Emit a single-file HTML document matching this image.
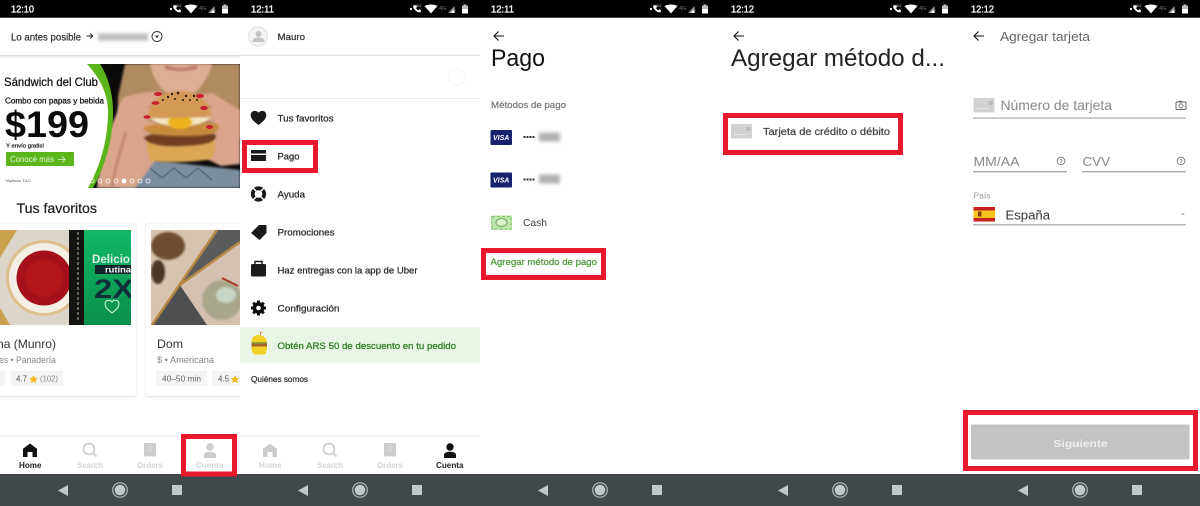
<!DOCTYPE html>
<html><head><meta charset="utf-8"><style>
html,body{margin:0;padding:0;background:#fff;width:1200px;height:506px;overflow:hidden}
svg{display:block;filter:blur(.3px)}
text{font-family:"Liberation Sans",sans-serif}
.m{stroke:currentColor;stroke-width:.25}
</style></head><body>
<svg width="1200" height="506" viewBox="0 0 1200 506" xmlns="http://www.w3.org/2000/svg">
<defs>
<filter id="b1" x="-20%" y="-20%" width="140%" height="140%"><feGaussianBlur stdDeviation="1"/></filter>
<filter id="b2" x="-30%" y="-80%" width="160%" height="260%"><feGaussianBlur stdDeviation="1.800"/></filter>
<clipPath id="photo"><rect x="0" y="64" width="240" height="124"/></clipPath>
<clipPath id="c1"><rect x="0" y="230" width="131" height="95"/></clipPath>
<clipPath id="c2"><rect x="151" y="230" width="89" height="95"/></clipPath>
<clipPath id="p1"><rect x="0" y="0" width="240" height="506"/></clipPath>
<linearGradient id="gg" x1="0" y1="0" x2="0" y2="1"><stop offset="0" stop-color="#12b868"/><stop offset="1" stop-color="#0a8f4c"/></linearGradient>
<g id="st">
<circle cx="171" cy="9" r="1.100" fill="#fff"/>
<path d="M174 5.500l2-.5 1 2-1 1c.5 1 1.200 1.800 2.200 2.300l1-1 2 1-.5 2c-4 .5-7.500-3-7.700-6.800z" fill="#fff"/>
<path d="M184.500 6c3.500-2 9.500-2 13 0l-6.500 7.500z" fill="#fff"/>
<path d="M208 13h6.500V6z" fill="#999"/><path d="M211 13h3.500V9z" fill="#fff"/>
<rect x="222" y="5.500" width="6" height="8" rx=".8" fill="#bbb"/><rect x="223.500" y="4.500" width="3" height="1.200" fill="#ccc"/><rect x="222" y="9" width="6" height="4.500" fill="#fff"/>
</g>
<g id="nv">
<rect x="0" y="474" width="240" height="32" fill="#41484c"/>
<path d="M68 485v11l-10-5.500z" fill="#c3c8ca"/>
<circle cx="120" cy="490" r="7.300" fill="none" stroke="#c3c8ca" stroke-width="1"/>
<circle cx="120" cy="490" r="5.300" fill="#c3c8ca"/>
<rect x="172" y="485" width="10" height="10" fill="#c3c8ca"/>
</g>
<g id="card"><rect width="21" height="14.500" rx="1" fill="#d2d2d2"/><rect x="15" y="3" width="4.500" height="4" fill="#bbb"/><path d="M3 10.500h13" stroke="#f2f2f2" stroke-width="1" stroke-dasharray="2 1"/></g>
<g id="visa"><rect width="21.500" height="15" rx="1" fill="#17226f"/><text x="10.700" y="10" font-size="7" font-weight="bold" font-style="italic" fill="#fff" text-anchor="middle">VISA</text></g>
<g id="arr"><path d="M5 0H-5M-.5-4.500L-5 0l4.500 4.500" fill="none" stroke="#111" stroke-width="1.100"/></g>
<g id="hm"><path d="M30 443.500l-7 5.300V457h4.500v-5h5v5H37v-8.200z"/></g>
<g id="sr"><circle cx="89" cy="449" r="5.500" fill="none" stroke="currentColor" stroke-width="1.700"/><path d="M93 453l3.500 3.500" stroke="currentColor" stroke-width="1.800"/></g>
<g id="or"><path d="M144 443h12v14l-1.500-1.300-1.500 1.300-1.500-1.300-1.500 1.300-1.500-1.300-1.500 1.300-1.500-1.300-1.500 1.300z"/><path d="M147 447h6M147 450h6" stroke="#fff" stroke-opacity=".45" stroke-width=".8"/></g>
<g id="us"><circle cx="210" cy="447" r="3.700"/><path d="M204 458v-3c0-2 2-3.300 6-3.300s6 1.300 6 3.300v3z"/></g>
</defs>

<rect width="1200" height="506" fill="#fff"/>

<!-- status bars -->
<rect width="1200" height="17" fill="#000"/>
<rect y="17" width="1200" height="1" fill="#444"/>
<g font-size="10" fill="#fff" color="#fff" style="stroke:#fff;stroke-width:.35">
<text x="11" y="12.500" textLength="23" lengthAdjust="spacingAndGlyphs">12:10</text>
<text x="251" y="12.500" textLength="23" lengthAdjust="spacingAndGlyphs">12:11</text>
<text x="491" y="12.500" textLength="23" lengthAdjust="spacingAndGlyphs">12:11</text>
<text x="731" y="12.500" textLength="23" lengthAdjust="spacingAndGlyphs">12:12</text>
<text x="971" y="12.500" textLength="23" lengthAdjust="spacingAndGlyphs">12:12</text>
</g>
<use href="#st"/><use href="#st" x="240"/><use href="#st" x="480"/><use href="#st" x="720"/><use href="#st" x="960"/>
<g font-size="5.500" fill="#777"><text x="199" y="10">4G</text><text x="439" y="10">4G</text><text x="679" y="10">4G</text><text x="919" y="10">4G</text><text x="1159" y="10">4G</text></g>
<g font-size="4" fill="#ddd"><text x="176" y="7">4G</text><text x="416" y="7">4G</text><text x="656" y="7">4G</text><text x="896" y="7">4G</text><text x="1136" y="7">4G</text></g>

<!-- nav bars -->
<use href="#nv"/><use href="#nv" x="240"/><use href="#nv" x="480"/><use href="#nv" x="720"/><use href="#nv" x="960"/>

<!-- PANEL 1 -->
<text x="11" y="40.500" font-size="10" fill="#333" class="m" color="#333" textLength="70" lengthAdjust="spacingAndGlyphs">Lo antes posible</text>
<path d="M86.500 36h6M90 33.500l2.700 2.500-2.700 2.500" fill="none" stroke="#222" stroke-width="1"/>
<rect x="98" y="33.500" width="50" height="7" fill="#aaa" opacity=".8" filter="url(#b2)"/>
<circle cx="157" cy="36.500" r="5" fill="#fff" stroke="#333" stroke-width=".9"/><path d="M155 35.500h4l-2 2.700z" fill="#333"/>
<rect y="55" width="240" height="1" fill="#dcdcdc"/><rect y="56" width="240" height="2" fill="#f3f3f3"/>

<g clip-path="url(#photo)">
<rect x="85" y="64" width="155" height="124" fill="#0d0b0a"/>
<path d="M125 64l-7 33v40h122V64z" fill="#b08a60" filter="url(#b1)"/>
<path d="M150 64c2 14 14 34 30 34s28-18 32-34z" fill="#dcae94" filter="url(#b1)"/>
<path d="M165 64q16 8 32 0v5q-16 4-32 0z" fill="#bc7e6e" filter="url(#b1)"/>
<!-- blouse -->
<path d="M118 188l34-28 88 10v18z" fill="#7c8da0" filter="url(#b1)"/>
<path d="M150 168l12 10 12-10 12 10 12-10 14 12" stroke="#5b6b80" stroke-width="1.500" fill="none"/>
<!-- left hand -->
<path d="M97 188c3-24 10-54 20-75 2-8 4-14 8-16 12-4 24-6 36-5l1 8-16 8 14-2 1 8-14 6 10 4-8 12 8 22-22 30z" fill="#d9a58c" filter="url(#b1)"/>
<path d="M112 188c2-16 8-36 14-56" stroke="#b97c68" fill="none" stroke-width="2" filter="url(#b1)"/>
<!-- right hand -->
<path d="M240 110l-28-17-14 2 2 8 14 4-10 2 1 9 12 7-4 3 2 8-14 20 20 10 19-2z" fill="#d9a58c" filter="url(#b1)"/>
<!-- burger -->
<path d="M150 160c-3-10-4-18-2-20h66c2 3 1 12-2 18-4 4-56 6-62 2z" fill="#d9a755" filter="url(#b1)"/>
<path d="M144 138c2-7 70-9 72-2-2 6-8 9-34 10-22 1-34-2-38-8z" fill="#6f3c22" filter="url(#b1)"/>
<path d="M143 128c4-6 72-8 76-2-2 8-8 10-36 10-26 0-36-2-40-8z" fill="#c88a3c" filter="url(#b1)"/>
<path d="M150 118c10-2 50-4 60 0-6 6-16 8-30 8s-24-2-30-8z" fill="#f5e7c0" filter="url(#b1)"/>
<ellipse cx="180" cy="122" rx="12" ry="7" fill="#eeb21e" filter="url(#b1)"/>
<path d="M148 116c2-14 14-25 32-25 16 0 28 9 31 24-6 3-56 5-63 1z" fill="#d49a55" filter="url(#b1)"/>
<g fill="#2c1a10"><circle cx="168" cy="97" r="1.200"/><circle cx="172" cy="94" r="1.200"/><circle cx="178" cy="93" r="1.300"/><circle cx="186" cy="96" r="1.200"/><circle cx="194" cy="96" r="1.200"/><circle cx="175" cy="99" r="1"/><circle cx="183" cy="100" r="1"/><circle cx="190" cy="100" r="1"/><circle cx="197" cy="100" r="1"/><circle cx="163" cy="100" r="1"/></g>
<g fill="#c8202f"><ellipse cx="158" cy="94" rx="4" ry="2"/><ellipse cx="155.500" cy="103" rx="4" ry="1.800"/><ellipse cx="147" cy="117" rx="3.500" ry="1.700"/><ellipse cx="200" cy="96" rx="4" ry="2"/><ellipse cx="204" cy="108" rx="3.800" ry="2.200"/><ellipse cx="209.500" cy="127" rx="3.500" ry="2"/></g>
<!-- white left panel with green swoosh -->
<path d="M0 64h100c8 12 13 30 13 48 0 30-9 56-20 76H0z" fill="#5bb51a"/>
<path d="M0 64h87c13 14 21 30 21 48 0 30-9 56-20 76H0z" fill="#fff"/>
</g>
<text x="4" y="86" font-size="12" fill="#111" class="m" color="#111" textLength="94" lengthAdjust="spacingAndGlyphs">Sándwich del Club</text>
<text x="5" y="103.500" font-size="7.800" fill="#111" class="m" color="#111" textLength="99" lengthAdjust="spacingAndGlyphs">Combo con papas y bebida</text>
<text x="5" y="137" font-size="37" font-weight="bold" fill="#0a0a0a" textLength="84" lengthAdjust="spacingAndGlyphs">$199</text>
<text x="6" y="147.500" font-size="5.500" fill="#222" class="m" color="#222" textLength="38" lengthAdjust="spacingAndGlyphs">Y envío gratis!</text>
<rect x="6" y="152" width="68" height="14" fill="#5db51c"/>
<text x="10" y="162" font-size="8.500" fill="#e4f5d4" textLength="44" lengthAdjust="spacingAndGlyphs">Conocé más</text>
<path d="M58 159.500h7M62 156.500l3 3-3 3" fill="none" stroke="#e4f5d4" stroke-width=".8"/>
<text x="5" y="182" font-size="4" fill="#555" textLength="26" lengthAdjust="spacingAndGlyphs">*Aplican T&amp;C</text>
<g fill="none" stroke="#fff" stroke-width=".8" opacity=".95"><circle cx="92" cy="181" r="2"/><circle cx="100" cy="181" r="2"/><circle cx="108" cy="181" r="2"/><circle cx="116" cy="181" r="2"/><circle cx="132" cy="181" r="2"/><circle cx="140" cy="181" r="2"/><circle cx="148" cy="181" r="2"/></g>
<circle cx="124" cy="181" r="2.400" fill="#fff"/>

<text x="16.500" y="213" font-size="14" fill="#222" class="m" color="#222" textLength="80.500" lengthAdjust="spacingAndGlyphs">Tus favoritos</text>

<!-- cards -->
<g clip-path="url(#p1)">
<rect x="-8" y="224" width="144" height="173" rx="2" fill="#dedede" filter="url(#b1)"/>
<rect x="-8" y="224" width="144" height="172" rx="2" fill="#fff"/>
<rect x="146" y="224" width="110" height="173" rx="2" fill="#dedede" filter="url(#b1)"/>
<rect x="146" y="224" width="110" height="172" rx="2" fill="#fff"/>
</g>
<g clip-path="url(#c1)">
<rect x="0" y="230" width="80" height="95" fill="#dcd6ca"/>
<path d="M0 230h17L0 258zM0 308l10 17H0z" fill="#c9a24e"/>
<circle cx="44" cy="278" r="38" fill="#dcbf8c"/>
<circle cx="44" cy="278" r="35" fill="#f3efe4"/>
<circle cx="44" cy="278" r="27.500" fill="#a5111a"/>
<circle cx="44" cy="278" r="19" fill="#b4141c" filter="url(#b1)"/>
<rect x="69" y="230" width="15" height="95" fill="#14130f"/>
<path d="M78 232v90" stroke="#bbb" stroke-width="1" stroke-dasharray="3 2"/>
<rect x="84" y="230" width="47" height="95" fill="url(#gg)"/>
<text x="92" y="263" font-size="11.500" font-weight="bold" fill="#d7f3e0" textLength="38" lengthAdjust="spacingAndGlyphs">Delicio</text>
<rect x="95" y="265" width="36" height="9" fill="#10262a"/>
<text x="105" y="272.500" font-size="8" font-weight="bold" fill="#fff" textLength="26" lengthAdjust="spacingAndGlyphs">rutina</text>
<text x="94" y="298" font-size="27" font-weight="bold" fill="#10303a" textLength="40" lengthAdjust="spacingAndGlyphs">2X</text>
<path d="M112 313c-5-4-7-6-7-9 0-4 5-5 7-2 2-3 7-2 7 2 0 3-2 5-7 9z" fill="none" stroke="#d6f4e2" stroke-width="1"/>
</g>
<g clip-path="url(#c2)">
<rect x="151" y="230" width="89" height="95" fill="#d8c4ae"/>
<path d="M217 230h23v12l-60 43-27 40z" fill="#5a5b5b"/>
<path d="M153 325l27-40 27 40z" fill="#4e4f50"/>
<path d="M180 285l60-43v83h-33z" fill="#d6c1b1"/>
<path d="M152 325l65-95M180 285l60-43" stroke="#b78746" stroke-width="2.500"/>
<ellipse cx="168" cy="246" rx="17" ry="14" fill="#6e4e33" filter="url(#b1)"/>
<ellipse cx="158" cy="272" rx="7" ry="12" fill="#4d3626" filter="url(#b1)"/>
<ellipse cx="222" cy="300" rx="20" ry="20" fill="#a8a78a" filter="url(#b1)"/>
<ellipse cx="226" cy="295" rx="10" ry="8" fill="#c9d5c6" filter="url(#b1)"/>
<path d="M222 278l16 8" stroke="#a83a2a" stroke-width="2"/>
</g>
<text x="-3" y="348" font-size="12" fill="#333" textLength="59" lengthAdjust="spacingAndGlyphs">na (Munro)</text>
<text x="-1" y="363" font-size="9.500" fill="#858585" textLength="57" lengthAdjust="spacingAndGlyphs">es • Panadería</text>
<rect x="0" y="371" width="5" height="15" fill="#f4f4f4"/>
<rect x="11" y="371" width="52" height="15" fill="#f4f4f4"/>
<text x="16" y="381.500" font-size="8.500" fill="#555" textLength="11" lengthAdjust="spacingAndGlyphs">4.7</text>
<path d="M33.500 375l1.300 2.800 3 .3-2.200 2 .7 3-2.800-1.600-2.800 1.600.7-3-2.200-2 3-.3z" fill="#f7b91c"/>
<text x="40" y="381.500" font-size="8.500" fill="#888" textLength="18" lengthAdjust="spacingAndGlyphs">(102)</text>
<text x="157" y="348" font-size="12" fill="#333" textLength="26" lengthAdjust="spacingAndGlyphs">Dom</text>
<text x="157" y="363" font-size="9.500" fill="#858585" textLength="57" lengthAdjust="spacingAndGlyphs">$ • Americana</text>
<rect x="156" y="371" width="51" height="15" fill="#f4f4f4"/>
<text x="162" y="381.500" font-size="8.500" fill="#666" textLength="39" lengthAdjust="spacingAndGlyphs">40–50 min</text>
<rect x="212" y="371" width="28" height="15" fill="#f4f4f4"/>
<text x="218" y="381.500" font-size="8.500" fill="#555" textLength="11" lengthAdjust="spacingAndGlyphs">4.5</text>
<g clip-path="url(#p1)"><path d="M235 375l1.300 2.800 3 .3-2.200 2 .7 3-2.800-1.600-2.800 1.600.7-3-2.200-2 3-.3z" fill="#f7b91c"/></g>

<!-- bottom tabs 1 -->
<rect y="435" width="480" height="1.500" fill="#eee"/>
<use href="#hm" fill="#111"/>
<use href="#sr" color="#ccc"/>
<use href="#or" fill="#ccc"/>
<use href="#us" fill="#ccc"/>
<g font-size="8">
<text x="19" y="468" font-weight="bold" fill="#222" textLength="22.500" lengthAdjust="spacingAndGlyphs">Home</text>
<text x="77" y="468" font-weight="bold" fill="#d5d5d5" textLength="26" lengthAdjust="spacingAndGlyphs">Search</text>
<text x="137" y="468" font-weight="bold" fill="#d5d5d5" textLength="26" lengthAdjust="spacingAndGlyphs">Orders</text>
<text x="196" y="468" font-weight="bold" fill="#d5d5d5" textLength="27.500" lengthAdjust="spacingAndGlyphs">Cuenta</text>
</g>
<rect x="183.500" y="436.500" width="51" height="37.500" fill="none" stroke="#e8192c" stroke-width="5"/>

<!-- PANEL 2 -->
<circle cx="258" cy="36.500" r="9.500" fill="#f3f3f3" stroke="#e2e2e2" stroke-width="1"/>
<circle cx="258.500" cy="34" r="3" fill="#c4c4c4"/><path d="M252.500 42c0-3 2.500-4.500 6-4.500s6 1.500 6 4.500z" fill="#c4c4c4"/>
<text x="277.500" y="40" font-size="9.500" fill="#333" class="m" color="#333" textLength="27.500" lengthAdjust="spacingAndGlyphs">Mauro</text>
<rect x="240" y="54.500" width="240" height="1.500" fill="#e6e6e6"/>
<circle cx="457" cy="77" r="8" fill="none" stroke="#f4f4f4" stroke-width="1"/>
<rect x="240" y="98" width="240" height="1" fill="#ececec"/>

<path d="M258.500 125c-6-4.500-7.800-7-7.800-10 0-4.500 5.500-5.500 7.800-2.300 2.300-3.200 7.800-2.200 7.800 2.300 0 3-1.800 5.500-7.800 10z" fill="#1a1a1a"/>
<rect x="251" y="150" width="15" height="3.500" fill="#1a1a1a"/><rect x="251" y="155" width="15" height="6" fill="#1a1a1a"/>
<circle cx="258.500" cy="194" r="5.700" fill="none" stroke="#1a1a1a" stroke-width="3.800"/>
<path d="M253 188l3.500 3.500M264 188l-3.500 3.500M253 200l3.500-3.500M264 200l-3.500-3.500" stroke="#fff" stroke-width="1.500"/>
<path d="M251 233l8-8h7.500v8l-7 7z" fill="#1a1a1a"/>
<path d="M251 265.500c0-1 .5-1.500 1.500-1.500h12c1 0 1.500.5 1.500 1.500V275c0 1-.5 1.500-1.500 1.500h-12c-1 0-1.500-.5-1.500-1.500z" fill="#1a1a1a"/>
<path d="M255 264v-2.500h7v2.500" fill="none" stroke="#1a1a1a" stroke-width="1.400"/>
<circle cx="258.500" cy="308" r="4.500" fill="none" stroke="#111" stroke-width="2.800"/>
<g fill="#111"><rect x="257" y="300.500" width="3" height="15"/><rect x="251" y="306.500" width="15" height="3"/><rect x="257" y="300.500" width="3" height="15" transform="rotate(45 258.500 308)"/><rect x="257" y="300.500" width="3" height="15" transform="rotate(-45 258.500 308)"/></g>
<circle cx="258.500" cy="308" r="2.300" fill="#fff"/>

<g font-size="9.500" fill="#2a2a2a" class="m" color="#2a2a2a">
<text x="277.500" y="121.500" textLength="56" lengthAdjust="spacingAndGlyphs">Tus favoritos</text>
<text x="277.500" y="159.500" textLength="22" lengthAdjust="spacingAndGlyphs">Pago</text>
<text x="277.500" y="197.500" textLength="27.500" lengthAdjust="spacingAndGlyphs">Ayuda</text>
<text x="277.500" y="235.500" textLength="57" lengthAdjust="spacingAndGlyphs">Promociones</text>
<text x="277.500" y="273.500" textLength="140" lengthAdjust="spacingAndGlyphs">Haz entregas con la app de Uber</text>
<text x="277.500" y="311.500" textLength="62" lengthAdjust="spacingAndGlyphs">Configuración</text>
</g>
<rect x="240" y="327" width="240" height="35.500" fill="#e9f5e5"/>
<path d="M251.500 342c0-4.500 3-7 7-7s8 2.500 8.500 7z" fill="#f2d024"/>
<rect x="251.500" y="342" width="15.500" height="1.500" fill="#8aa83a"/>
<rect x="251.500" y="343.500" width="15.500" height="3" fill="#a5622b"/>
<path d="M251.500 346.500h15.500c0 4-1 8-3.500 8h-8.500c-2.500 0-3.500-4-3.500-8z" fill="#f2d024"/>
<path d="M260.500 335v-2.500l1.800-.5" stroke="#d86a2a" stroke-width=".8" fill="none"/>
<text x="277.500" y="349" font-size="9.500" fill="#2b7d1f" class="m" color="#2b7d1f" textLength="178.500" lengthAdjust="spacingAndGlyphs">Obtén ARS 50 de descuento en tu pedido</text>
<text x="251" y="382" font-size="8" fill="#333" class="m" color="#333" textLength="57" lengthAdjust="spacingAndGlyphs">Quiénes somos</text>

<use href="#hm" x="240" fill="#ccc"/>
<use href="#sr" x="240" color="#ccc"/>
<use href="#or" x="240" fill="#ccc"/>
<use href="#us" x="240" fill="#111"/>
<g font-size="8">
<text x="259" y="468" font-weight="bold" fill="#d5d5d5" textLength="22.500" lengthAdjust="spacingAndGlyphs">Home</text>
<text x="317" y="468" font-weight="bold" fill="#d5d5d5" textLength="26" lengthAdjust="spacingAndGlyphs">Search</text>
<text x="377" y="468" font-weight="bold" fill="#d5d5d5" textLength="26" lengthAdjust="spacingAndGlyphs">Orders</text>
<text x="436" y="468" font-weight="bold" fill="#222" textLength="27.500" lengthAdjust="spacingAndGlyphs">Cuenta</text>
</g>
<rect x="244.500" y="142.500" width="71" height="28" fill="none" stroke="#e8192c" stroke-width="5"/>

<!-- PANEL 3 -->
<use href="#arr" x="499" y="36"/>
<text x="491" y="66" font-size="24" fill="#111" textLength="54" lengthAdjust="spacingAndGlyphs">Pago</text>
<text x="491" y="108" font-size="9.500" fill="#7b7b7b" class="m" color="#7b7b7b" textLength="75" lengthAdjust="spacingAndGlyphs">Métodos de pago</text>
<use href="#visa" x="490.500" y="130"/>
<use href="#visa" x="490.500" y="172.500"/>
<g fill="#333"><rect x="523.500" y="136" width="2" height="2"/><rect x="526.500" y="136" width="2" height="2"/><rect x="529.500" y="136" width="2" height="2"/><rect x="532.500" y="136" width="2" height="2"/>
<rect x="523.500" y="178.500" width="2" height="2"/><rect x="526.500" y="178.500" width="2" height="2"/><rect x="529.500" y="178.500" width="2" height="2"/><rect x="532.500" y="178.500" width="2" height="2"/></g>
<rect x="539" y="132.500" width="21" height="9" fill="#b0b0b0" filter="url(#b2)"/>
<rect x="539" y="174.500" width="21" height="9" fill="#b0b0b0" filter="url(#b2)"/>
<rect x="491" y="215.500" width="21" height="14.500" fill="#bce6ab"/>
<rect x="492" y="216.500" width="19" height="12.500" fill="none" stroke="#7dc765" stroke-width="1" stroke-dasharray="3 2"/>
<ellipse cx="501.500" cy="222.500" rx="5.500" ry="4" fill="#d8f2cc" stroke="#6fa860" stroke-width="1"/>
<text x="523" y="226" font-size="10.500" fill="#444" textLength="24" lengthAdjust="spacingAndGlyphs">Cash</text>
<rect x="483.500" y="250.500" width="120" height="27" fill="none" stroke="#e8192c" stroke-width="5"/>
<text x="490.500" y="265" font-size="9.500" fill="#4f9a3c" class="m" color="#4f9a3c" textLength="106.500" lengthAdjust="spacingAndGlyphs">Agregar método de pago</text>

<!-- PANEL 4 -->
<use href="#arr" x="739" y="36"/>
<text x="731" y="66" font-size="24" fill="#222" textLength="214" lengthAdjust="spacingAndGlyphs">Agregar método d...</text>
<rect x="725.500" y="115.500" width="175" height="37" fill="none" stroke="#e8192c" stroke-width="5"/>
<use href="#card" x="731" y="124"/>
<text x="763" y="135" font-size="10" fill="#444" class="m" color="#444" textLength="127" lengthAdjust="spacingAndGlyphs">Tarjeta de crédito o débito</text>

<!-- PANEL 5 -->
<use href="#arr" x="979" y="36"/>
<text x="1000" y="41" font-size="13" fill="#666" textLength="90" lengthAdjust="spacingAndGlyphs">Agregar tarjeta</text>
<use href="#card" x="973.500" y="98"/>
<text x="1000.500" y="110" font-size="14" fill="#888" textLength="111.500" lengthAdjust="spacingAndGlyphs">Número de tarjeta</text>
<rect x="1176" y="102" width="10" height="7.500" rx="1" fill="none" stroke="#666" stroke-width="1"/>
<circle cx="1181" cy="105.800" r="2" fill="none" stroke="#666" stroke-width=".9"/><rect x="1178.500" y="100.800" width="4" height="1.200" fill="#666"/>
<rect x="973" y="117.500" width="213" height="1.200" fill="#aaa"/>
<text x="973.500" y="166" font-size="13" fill="#888" textLength="46" lengthAdjust="spacingAndGlyphs">MM/AA</text>
<circle cx="1061" cy="161" r="3.800" fill="none" stroke="#777" stroke-width=".9"/><text x="1061" y="163" font-size="5.500" font-weight="bold" fill="#777" text-anchor="middle">?</text>
<rect x="973" y="171" width="94" height="1.400" fill="#aaa"/>
<text x="1082.500" y="166" font-size="13" fill="#888" textLength="27.500" lengthAdjust="spacingAndGlyphs">CVV</text>
<circle cx="1181" cy="161" r="3.800" fill="none" stroke="#777" stroke-width=".9"/><text x="1181" y="163" font-size="5.500" font-weight="bold" fill="#777" text-anchor="middle">?</text>
<rect x="1082" y="171" width="104" height="1.400" fill="#aaa"/>
<text x="973.500" y="198.500" font-size="8" fill="#999" textLength="17" lengthAdjust="spacingAndGlyphs">País</text>
<rect x="973.500" y="207" width="21.500" height="14.500" fill="#c8201f"/>
<rect x="973.500" y="210.500" width="21.500" height="7.500" fill="#f6c21c"/>
<rect x="978" y="211.500" width="3.500" height="5" fill="#8a3b1e"/>
<text x="1005.500" y="219.500" font-size="12.500" fill="#333" textLength="44.500" lengthAdjust="spacingAndGlyphs">España</text>
<path d="M1181 213.500h4l-2 2z" fill="#aaa"/>
<rect x="973" y="224" width="213" height="1.500" fill="#b8b8b8"/>
<rect x="965.500" y="412.500" width="230" height="56" fill="none" stroke="#e8192c" stroke-width="5"/>
<rect x="971" y="424.500" width="218.500" height="35" rx="1" fill="#c4c4c4"/>
<text x="1080.500" y="447" font-size="10.500" font-weight="bold" fill="#eee" text-anchor="middle" textLength="54" lengthAdjust="spacingAndGlyphs">Siguiente</text>
</svg>
</body></html>
